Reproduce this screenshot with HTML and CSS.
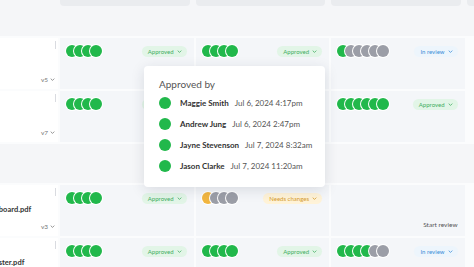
FILE: index.html
```html
<!DOCTYPE html>
<html lang="en">
<head>
    <meta charset="UTF-8">
    <meta name="viewport" content="width=device-width, initial-scale=1.0">
    <title>Reviews</title>
    <link rel="stylesheet" href="styles.css">
</head>
<body>
    <div class="board">
        <!-- cabecalho das colunas -->
        <div class="row head">
            <div class="file"></div>
            <div class="col"><div class="pill"></div></div>
            <div class="col"><div class="pill"></div></div>
            <div class="col"><div class="pill"></div></div>
            <div class="col"><div class="pill"></div></div>
        </div>

        <div class="row">
            <div class="file">
                <span class="kebab"></span>
                <span class="version">v5 <svg class="chev" viewBox="0 0 8 5"><path d="M1 1l3 3 3-3"/></svg></span>
            </div>
            <div class="cell">
                <div class="top">
                    <div class="stack"><i class="av g"></i><i class="av g"></i><i class="av g"></i><i class="av g"></i></div>
                    <span class="badge ok">Approved <svg class="chev" viewBox="0 0 8 5"><path d="M1 1l3 3 3-3"/></svg></span>
                </div>
            </div>
            <div class="cell">
                <div class="top">
                    <div class="stack"><i class="av g"></i><i class="av g"></i><i class="av g"></i><i class="av g"></i></div>
                    <span class="badge ok">Approved <svg class="chev" viewBox="0 0 8 5"><path d="M1 1l3 3 3-3"/></svg></span>
                </div>
            </div>
            <div class="cell">
                <div class="top">
                    <div class="stack"><i class="av g"></i><i class="av"></i><i class="av"></i><i class="av"></i><i class="av"></i><i class="av"></i></div>
                    <span class="badge review">In review <svg class="chev" viewBox="0 0 8 5"><path d="M1 1l3 3 3-3"/></svg></span>
                </div>
            </div>
            <div class="empty"></div>
        </div>

        <div class="row">
            <div class="file">
                <span class="kebab"></span>
                <span class="version">v7 <svg class="chev" viewBox="0 0 8 5"><path d="M1 1l3 3 3-3"/></svg></span>
            </div>
            <div class="cell">
                <div class="top">
                    <div class="stack"><i class="av g"></i><i class="av g"></i><i class="av g"></i><i class="av g"></i></div>
                    <span class="badge ok">Approved <svg class="chev" viewBox="0 0 8 5"><path d="M1 1l3 3 3-3"/></svg></span>
                </div>
            </div>
            <div class="cell">
                <div class="top">
                    <div class="stack"><i class="av g"></i><i class="av g"></i><i class="av g"></i><i class="av g"></i></div>
                    <span class="badge ok">Approved <svg class="chev" viewBox="0 0 8 5"><path d="M1 1l3 3 3-3"/></svg></span>
                </div>
            </div>
            <div class="cell">
                <div class="top">
                    <div class="stack"><i class="av g"></i><i class="av g"></i><i class="av g"></i><i class="av g"></i><i class="av g"></i><i class="av g"></i></div>
                    <span class="badge ok">Approved <svg class="chev" viewBox="0 0 8 5"><path d="M1 1l3 3 3-3"/></svg></span>
                </div>
            </div>
            <div class="empty"></div>
        </div>

        <div class="row spacer"></div>

        <div class="row">
            <div class="file">
                <span class="kebab"></span>
                <span class="name">Moodboard.pdf</span>
                <span class="version">v3 <svg class="chev" viewBox="0 0 8 5"><path d="M1 1l3 3 3-3"/></svg></span>
            </div>
            <div class="cell">
                <div class="top">
                    <div class="stack"><i class="av g"></i><i class="av g"></i><i class="av g"></i><i class="av g"></i></div>
                    <span class="badge ok">Approved <svg class="chev" viewBox="0 0 8 5"><path d="M1 1l3 3 3-3"/></svg></span>
                </div>
            </div>
            <div class="cell">
                <div class="top">
                    <div class="stack"><i class="av y"></i><i class="av"></i><i class="av"></i><i class="av"></i></div>
                    <span class="badge warn">Needs changes <svg class="chev" viewBox="0 0 8 5"><path d="M1 1l3 3 3-3"/></svg></span>
                </div>
            </div>
            <div class="cell">
                <span class="foot">Start review</span>
            </div>
            <div class="empty"></div>
        </div>

        <div class="row">
            <div class="file">
                <span class="kebab"></span>
                <span class="name">Ad poster.pdf</span>
                <span class="version">v2 <svg class="chev" viewBox="0 0 8 5"><path d="M1 1l3 3 3-3"/></svg></span>
            </div>
            <div class="cell">
                <div class="top">
                    <div class="stack"><i class="av g"></i><i class="av g"></i><i class="av g"></i><i class="av g"></i></div>
                    <span class="badge ok">Approved <svg class="chev" viewBox="0 0 8 5"><path d="M1 1l3 3 3-3"/></svg></span>
                </div>
            </div>
            <div class="cell">
                <div class="top">
                    <div class="stack"><i class="av g"></i><i class="av g"></i><i class="av g"></i><i class="av g"></i></div>
                    <span class="badge ok">Approved <svg class="chev" viewBox="0 0 8 5"><path d="M1 1l3 3 3-3"/></svg></span>
                </div>
            </div>
            <div class="cell">
                <div class="top">
                    <div class="stack"><i class="av g"></i><i class="av g"></i><i class="av g"></i><i class="av g"></i><i class="av"></i><i class="av"></i></div>
                    <span class="badge review">In review <svg class="chev" viewBox="0 0 8 5"><path d="M1 1l3 3 3-3"/></svg></span>
                </div>
            </div>
            <div class="empty"></div>
        </div>
    </div>

    <!-- popover de aprovacoes -->
    <div class="popover">
        <p class="pop-title">Approved by</p>
        <div class="person"><i class="dot"></i><span class="pname">Maggie Smith</span><span class="pdate">Jul 6, 2024 4:17pm</span></div>
        <div class="person"><i class="dot"></i><span class="pname">Andrew Jung</span><span class="pdate">Jul 6, 2024 2:47pm</span></div>
        <div class="person"><i class="dot"></i><span class="pname">Jayne Stevenson</span><span class="pdate">Jul 7, 2024 8:32am</span></div>
        <div class="person"><i class="dot"></i><span class="pname">Jason Clarke</span><span class="pdate">Jul 7, 2024 11:20am</span></div>
    </div>
</body>
</html>
```

FILE: styles.css
```css
html, body {
    overflow: hidden;
}

body {
    font-family: Lato, "Noto Sans", sans-serif;
    background-color: #fbfcfd;
    margin: 0;
    padding: 0;
}

.board {
    margin-left: -22px;
}

.row {
    display: grid;
    grid-template-columns: 80px repeat(4, 133.5px);
    column-gap: 2px;
    height: 51px;
    margin-bottom: 2px;
}

/* faixa do cabecalho e espaco entre grupos */
.row.head {
    height: 36px;
    background-color: #f5f6f8;
}

.row.spacer {
    height: 39px;
    background-color: #f5f6f8;
}

.pill {
    height: 6px;
    margin-right: 4px;
    background-color: #eaecef;
    border-radius: 0 0 4px 4px;
}

.file {
    background-color: #fff;
    display: flex;
    flex-direction: column;
    padding: 3px 3px 0 3px;
}

.head .file {
    background: none;
}

.kebab {
    align-self: flex-end;
    width: 1px;
    height: 8px;
    margin-right: -1px;
    background-color: #d9dbe0;
}

.name {
    margin-top: 9px;
    margin-left: -2px;
    font-size: 7.5px;
    line-height: 10px;
    font-weight: 700;
    color: #333;
    white-space: nowrap;
}

.version {
    margin-top: auto;
    margin-bottom: 5.5px;
    align-self: flex-end;
    font-size: 6.5px;
    line-height: 9px;
    color: #777;
    display: flex;
    align-items: center;
    gap: 2px;
}

.chev {
    width: 5px;
    height: 3px;
    fill: none;
    stroke: currentColor;
    stroke-width: 1.3;
}

.cell {
    background-color: #f4f6f9;
    padding: 7px 7px 7px 6px;
    display: flex;
    flex-direction: column;
}

.top {
    display: flex;
    justify-content: space-between;
    align-items: center;
    height: 12px;
}

.stack {
    display: flex;
}

.av {
    width: 12px;
    height: 12px;
    border-radius: 50%;
    background-color: #9b9ea7;
    box-shadow: 0 0 0 1px #fff;
}

.av + .av {
    margin-left: -4px;
}

.av.g {
    background-color: #21b84b;
}

.av.y {
    background-color: #f2b640;
}

.badge {
    display: inline-flex;
    align-items: center;
    gap: 3px;
    height: 11px;
    padding: 0 5px 0 6px;
    border-radius: 6px;
    font-size: 6px;
}

.badge.ok {
    background-color: #e2f5e7;
    color: #3fae5f;
}

.badge.warn {
    background-color: #fff3d8;
    color: #d69b2c;
}

.badge.review {
    background-color: #edf5fc;
    color: #3b8ed8;
}

.foot {
    margin-top: auto;
    align-self: flex-end;
    font-size: 6.5px;
    line-height: 9px;
    color: #555;
}

.popover {
    position: absolute;
    left: 144px;
    top: 66px;
    width: 181px;
    height: 121px;
    box-sizing: border-box;
    padding: 12px 15px 10px;
    background-color: #fff;
    border-radius: 4px;
    box-shadow: 0 3px 14px rgba(30, 40, 60, 0.13);
}

.pop-title {
    margin: 0 0 1px;
    font-size: 10px;
    line-height: 13px;
    color: #555;
}

.person {
    display: flex;
    align-items: center;
    height: 21px;
    white-space: nowrap;
}

.dot {
    flex-shrink: 0;
    width: 12px;
    height: 12px;
    border-radius: 50%;
    background-color: #21b84b;
    margin-right: 9px;
}

.pname {
    flex-shrink: 0;
    font-size: 8px;
    font-weight: 700;
    color: #333;
    margin-right: 6px;
}

.pdate {
    flex-shrink: 0;
    font-size: 8px;
    color: #555;
}
```
